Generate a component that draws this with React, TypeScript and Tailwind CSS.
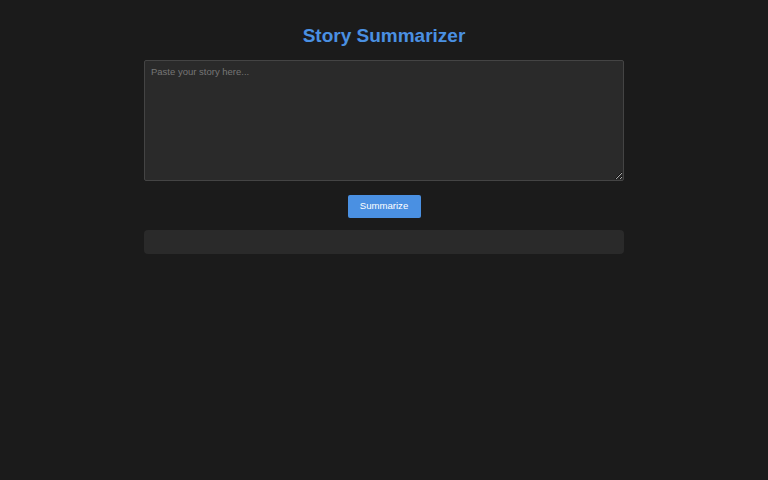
import { useState } from 'react';

export default function App() {
  const [story, setStory] = useState('');
  const [summary, setSummary] = useState('');

  const summarize = () => {
    const first = story.split(/(?<=[.!?])\s+/).slice(0, 2).join(' ');
    setSummary(first);
  };

  return (
    <div className="min-h-[480px] bg-[#1b1b1b] font-['Liberation_Sans',Arial,sans-serif] text-[#e0e0e0]">
      <div className="mx-auto w-[480px] pt-[24px]">
        <h1 className="text-center text-[19px] font-bold leading-[24px] text-[#4a90e2]">Story Summarizer</h1>
        <textarea
          value={story}
          onChange={(e) => setStory(e.target.value)}
          placeholder="Paste your story here..."
          className="mt-[12px] block h-[121px] w-full rounded-[2px] border border-[#444] bg-[#2a2a2a] px-[6px] py-[4px] text-[9.5px] text-[#ddd] outline-none placeholder:text-[#767676]"
        />
        <div className="mt-[14px] flex justify-center">
          <button
            type="button"
            onClick={summarize}
            className="h-[23px] w-[73px] rounded-[2px] bg-[#4a90e2] text-[9.6px] text-white"
          >
            Summarize
          </button>
        </div>
        <div className="mt-[12px] min-h-[24px] rounded-[4px] bg-[#2a2a2a] px-[10px] py-[6px] text-[10px]">{summary}</div>
      </div>
    </div>
  );
}
